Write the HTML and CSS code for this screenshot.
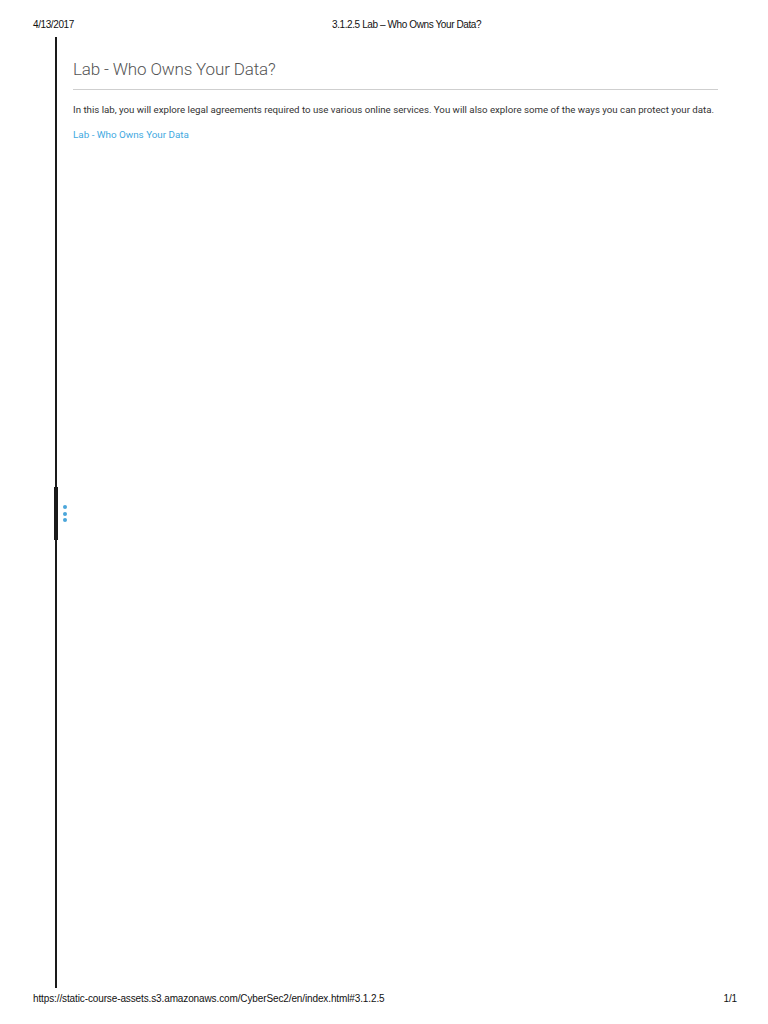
FILE: index.html
```html
<!DOCTYPE html>
<html>
<head>
<meta charset="utf-8">
<link rel="stylesheet" href="styles.css">
</head>
<body>
<header class="print-head">
  <span class="date">4/13/2017</span>
  <span class="doc-title">3.1.2.5 Lab – Who Owns Your Data?</span>
</header>
<main class="page">
  <div class="grip"></div>
  <div class="dots"><span></span><span></span><span></span></div>
  <section class="content">
    <h1 class="heading">Lab - Who Owns Your Data?</h1>
    <p class="intro">In this lab, you will explore legal agreements required to use various online services. You will also explore some of the ways you can protect your data.</p>
    <a class="lab-link" href="#">Lab - Who Owns Your Data</a>
  </section>
</main>
<footer class="print-foot">
  <span class="url">https://static-course-assets.s3.amazonaws.com/CyberSec2/en/index.html#3.1.2.5</span>
  <span class="pages">1/1</span>
</footer>
</body>
</html>
```
FILE: styles.css
```css
html, body {
  margin: 0;
  padding: 0;
  background: #fff;
}
body {
  width: 768px;
  height: 1024px;
  font-family: "Liberation Sans", Arial, sans-serif;
  color: #111;
}
.print-head {
  display: grid;
  grid-template-columns: 299px 1fr;
  padding: 19px 0 0 33px;
  height: 18px;
  font-size: 10px;
  line-height: 12px;
  letter-spacing: -0.4px;
}
.page {
  position: relative;
  margin-left: 55px;
  border-left: 2px solid #1a1a1a;
  height: 951px;
}
.grip {
  position: absolute;
  left: -3px;
  top: 450px;
  width: 4px;
  height: 53px;
  background: #1a1a1a;
}
.dots {
  position: absolute;
  left: 6px;
  top: 468px;
  display: flex;
  flex-direction: column;
  gap: 2.5px;
}
.dots span {
  width: 4px;
  height: 4px;
  border-radius: 50%;
  background: #4ba6da;
}
.content {
  padding: 20px 17px 0 16px;
  width: 645px;
}
.heading {
  margin: 0;
  font-family: Roboto, "Liberation Sans", sans-serif;
  font-weight: 300;
  font-size: 17px;
  line-height: 24px;
  letter-spacing: -0.15px;
  color: #555;
  padding-bottom: 8px;
  border-bottom: 1px solid #cfcfcf;
}
.intro {
  margin: 14px 0 0;
  font-family: Roboto, "Liberation Sans", sans-serif;
  font-size: 9.7px;
  line-height: 12px;
  color: #333;
}
.lab-link {
  display: inline-block;
  margin-top: 13px;
  font-family: Roboto, "Liberation Sans", sans-serif;
  font-size: 9.85px;
  line-height: 12px;
  color: #3fa9df;
  text-decoration: none;
}
.print-foot {
  display: flex;
  justify-content: space-between;
  padding: 5px 31px 0 33px;
  font-size: 10px;
  line-height: 12px;
  letter-spacing: -0.12px;
}
```
